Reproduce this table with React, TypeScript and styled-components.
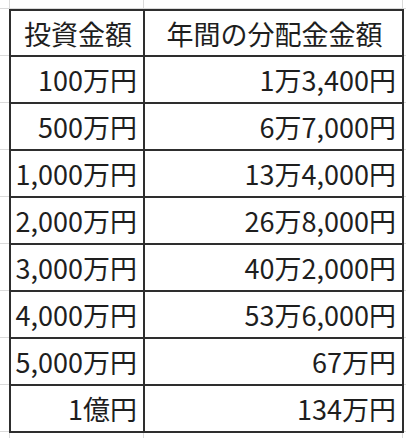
import React from "react";
import styled, { createGlobalStyle } from "styled-components";

const GlobalStyle = createGlobalStyle`
  html, body {
    margin: 0;
    padding: 0;
    background: #ffffff;
  }
  body {
    font-family: "Noto Sans CJK JP", "Noto Sans", sans-serif;
    color: #1e1e1e;
  }
`;

const GRID = "#dadada";
const LINE = "#2e2e2e";

const Sheet = styled.div`
  width: 406px;
  height: 438px;
  box-sizing: border-box;
  padding: 9px 0 0 9px;
  overflow: hidden;
  background-color: #ffffff;
  background-image:
    linear-gradient(to right, ${GRID} 1px, transparent 1px),
    linear-gradient(to right, ${GRID} 1px, transparent 1px),
    linear-gradient(to right, ${GRID} 1px, transparent 1px),
    linear-gradient(to bottom, ${GRID} 1px, transparent 1px);
  background-size: 1px 100%, 1px 100%, 1px 100%, 100% 47px;
  background-position: 9px 0, 143px 0, 402px 0, 0 8px;
  background-repeat: no-repeat, no-repeat, no-repeat, repeat-y;
`;

const Table = styled.div`
  display: grid;
  grid-template-columns: 134px 259px;
  grid-template-rows: 46px;
  grid-auto-rows: 47px;
  width: max-content;
  border-top: 2px solid ${LINE};
  border-left: 2px solid ${LINE};
  background: #ffffff;
`;

const Cell = styled.div<{ $head?: boolean }>`
  box-sizing: border-box;
  display: flex;
  align-items: center;
  justify-content: ${(p) => (p.$head ? "center" : "flex-end")};
  padding: ${(p) => (p.$head ? "0 2px 0 4px" : "0 6px 0 0")};
  border-right: 2px solid ${LINE};
  border-bottom: 2px solid ${LINE};
  font-size: 27px;
  line-height: 1;
  white-space: nowrap;
  overflow: hidden;
`;

const rows: [string, string][] = [
  ["100万円", "1万3,400円"],
  ["500万円", "6万7,000円"],
  ["1,000万円", "13万4,000円"],
  ["2,000万円", "26万8,000円"],
  ["3,000万円", "40万2,000円"],
  ["4,000万円", "53万6,000円"],
  ["5,000万円", "67万円"],
  ["1億円", "134万円"],
];

export default function App() {
  return (
    <>
      <GlobalStyle />
      <Sheet>
        <Table>
          <Cell $head>投資金額</Cell>
          <Cell $head>年間の分配金金額</Cell>
          {rows.map(([a, b]) => (
            <React.Fragment key={a}>
              <Cell>{a}</Cell>
              <Cell>{b}</Cell>
            </React.Fragment>
          ))}
        </Table>
      </Sheet>
    </>
  );
}
